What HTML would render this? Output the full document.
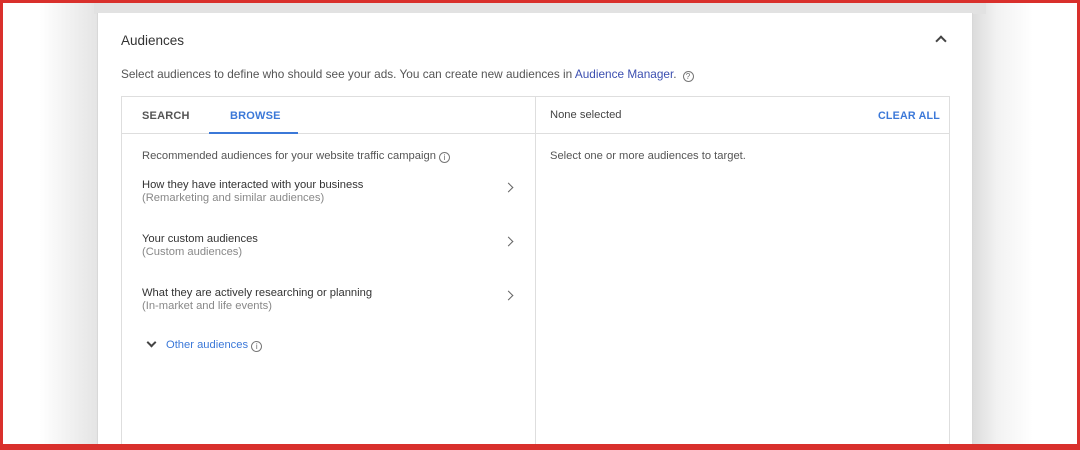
<!DOCTYPE html>
<html><head><style>
*{margin:0;padding:0;box-sizing:border-box}
html,body{width:1080px;height:450px;overflow:hidden}
body{background:#fff;font-family:"Liberation Sans",Arial,sans-serif;position:relative}
.frame{position:absolute;left:0;top:0;width:1080px;height:450px;border:3px solid #d9302c;border-bottom-width:6px;z-index:10;pointer-events:none}
.shadowL{position:absolute;left:40px;top:3px;width:58px;height:441px;background:linear-gradient(to right,#fff,#e4e4e4)}
.shadowR{position:absolute;left:973px;top:3px;width:60px;height:441px;background:linear-gradient(to right,#dcdcdc,#f2f2f2 40%,#fff)}
.topstrip{position:absolute;left:94px;top:3px;width:892px;height:11px;background:#e2e2e2}
.card{position:absolute;left:97px;top:13px;width:876px;height:431px;background:#fff;border-left:1px solid #d8d8d8;border-right:1px solid #d8d8d8;overflow:hidden}
.t{position:absolute;white-space:nowrap}
.panel{position:absolute;left:23px;top:83px;width:829px;height:360px;border:1px solid #dedede}
.hdr{position:absolute;left:0;top:0;right:0;height:37px;border-bottom:1px solid #dedede}
.vdiv{position:absolute;left:413px;top:0;bottom:0;width:1px;background:#dedede}
.chev{position:absolute;width:7px;height:7px;border-right:1.5px solid #666;border-top:1.5px solid #666;transform:rotate(45deg)}
.ic{display:inline-block;width:11px;height:11px;border:1px solid #777;border-radius:50%;font-size:8px;text-align:center;line-height:10px;color:#666;vertical-align:-1px}
</style></head><body>
<div class="shadowL"></div><div class="shadowR"></div><div class="topstrip"></div>
<div class="card">
<div class="t" style="left:23px;top:20px;font-size:13.5px;color:#333">Audiences</div>
<div style="position:absolute;left:839px;top:24px;width:8px;height:8px;border-left:2px solid #444;border-top:2px solid #444;transform:rotate(45deg)"></div>
<div class="t" style="left:23px;top:54px;font-size:11.8px;color:#555">Select audiences to define who should see your ads. You can create new audiences in <span style="color:#3c4fb0">Audience Manager</span>.<span class="ic" style="margin-left:6px">?</span></div>
<div class="panel">
<div class="hdr"></div>
<div class="vdiv"></div>
<div class="t" style="left:20px;top:13px;font-size:11px;color:#555;font-weight:bold;letter-spacing:.2px">SEARCH</div>
<div class="t" style="left:108px;top:13px;font-size:11px;color:#3b78d8;font-weight:bold;letter-spacing:.2px">BROWSE</div>
<div style="position:absolute;left:87px;top:35px;width:89px;height:2px;background:#3b78d8"></div>
<div class="t" style="left:428px;top:12px;font-size:11.2px;color:#444">None selected</div>
<div class="t" style="left:756px;top:13px;font-size:10.7px;color:#3b78d8;font-weight:bold;letter-spacing:.2px">CLEAR ALL</div>
<div class="t" style="left:20px;top:53px;font-size:11.2px;color:#555">Recommended audiences for your website traffic campaign <span class="ic">i</span></div>
<div class="t" style="left:428px;top:53px;font-size:11.2px;color:#555">Select one or more audiences to target.</div>
<div class="t" style="left:20px;top:82px;font-size:11.2px;color:#333;line-height:13px">How they have interacted with your business<br><span style="color:#888">(Remarketing and similar audiences)</span></div>
<div class="chev" style="left:383px;top:87px"></div>
<div class="t" style="left:20px;top:136px;font-size:11.2px;color:#333;line-height:13px">Your custom audiences<br><span style="color:#888">(Custom audiences)</span></div>
<div class="chev" style="left:383px;top:141px"></div>
<div class="t" style="left:20px;top:190px;font-size:11.2px;color:#333;line-height:13px">What they are actively researching or planning<br><span style="color:#888">(In-market and life events)</span></div>
<div class="chev" style="left:383px;top:195px"></div>
<div style="position:absolute;left:26px;top:242px;width:7px;height:7px;border-right:2px solid #444;border-bottom:2px solid #444;transform:rotate(45deg)"></div>
<div class="t" style="left:44px;top:242px;font-size:11.2px;color:#3b78d8">Other audiences <span class="ic">i</span></div>
</div>
</div>
<div class="frame"></div>
</body></html>
